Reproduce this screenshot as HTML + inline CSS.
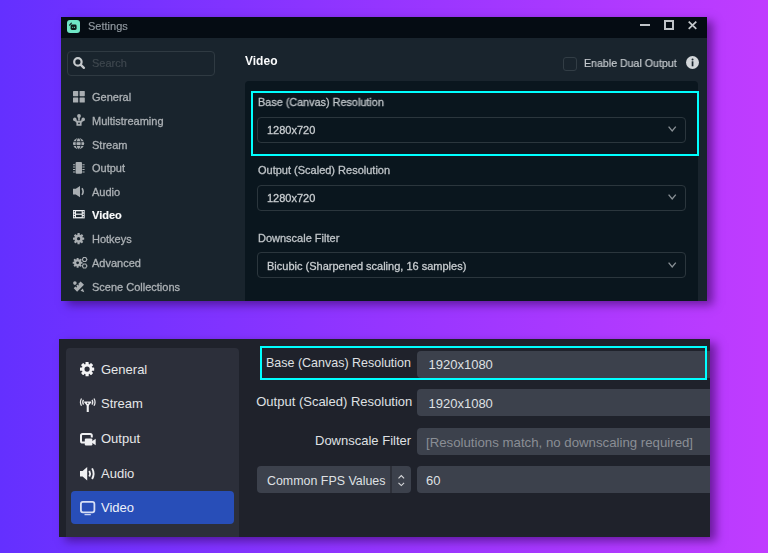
<!DOCTYPE html>
<html><head><meta charset="utf-8">
<style>
*{margin:0;padding:0;box-sizing:border-box}
html,body{width:768px;height:553px;overflow:hidden}
body{background:linear-gradient(90deg,#6430ff 0%,#9535ff 50%,#c03cff 100%);font-family:"Liberation Sans",sans-serif;position:relative}
.a{position:absolute}
svg{position:absolute;overflow:visible}
.t{position:absolute;white-space:nowrap;line-height:1;will-change:transform}
.s1{font-size:11px;color:#acb1b5;-webkit-text-stroke:0.3px #acb1b5}
.l1{font-size:11px;color:#bfc4c8;-webkit-text-stroke:0.3px #bfc4c8}
.dd{position:absolute;left:257px;width:428.5px;height:26px;border:1px solid #2b363d;border-radius:4px}
.s2{font-size:13px;color:#e6e7e9;will-change:auto}
.l2{font-size:13px;color:#dfe0e3;will-change:auto}
.inp{position:absolute;left:417px;width:292.5px;height:27px;background:#3c414c;border-radius:4px 0 0 4px}
</style></head><body>

<!-- ================= TOP WINDOW ================= -->
<div class="a" style="left:61px;top:17px;width:646px;height:284px;background:#19242d;box-shadow:6px 4px 9px rgba(45,0,80,.55)"></div>
<div class="a" style="left:61px;top:17px;width:646px;height:20.5px;background:#050c13"></div>
<!-- app logo -->
<svg style="left:67px;top:20px" width="13" height="13" viewBox="0 0 13 13">
  <rect x="0" y="0" width="13" height="13" rx="3" fill="#6fe6c6"/>
  <rect x="3.6" y="4.6" width="6" height="5.4" rx="1.4" fill="#0d1a1a"/>
  <path d="M2.6 5.2 L4.4 3.2" stroke="#0d1a1a" stroke-width="1.1" stroke-linecap="round"/>
  <rect x="5.2" y="6.8" width="1" height="1" fill="#6fe6c6"/><rect x="7" y="6.8" width="1" height="1" fill="#6fe6c6"/>
</svg>
<div class="t" style="left:88px;top:21px;font-size:11px;color:#939ba2;-webkit-text-stroke:0.15px #939ba2">Settings</div>
<!-- window buttons -->
<div class="a" style="left:640px;top:24.3px;width:10.2px;height:2px;background:#c0c4c8"></div>
<div class="a" style="left:663.7px;top:20px;width:10.3px;height:10px;border:2px solid #c0c4c8"></div>
<svg style="left:688px;top:21px" width="9" height="8.5" viewBox="0 0 9 8.5"><path d="M0.7 0.6L8.3 7.9M8.3 0.6L0.7 7.9" stroke="#c4c8cc" stroke-width="1.7"/></svg>

<!-- search -->
<div class="a" style="left:67px;top:50.5px;width:148px;height:25.5px;border:1px solid #2f3a42;border-radius:4px"></div>
<svg style="left:73px;top:57px" width="12" height="12" viewBox="0 0 12 12">
  <circle cx="4.9" cy="4.9" r="3.7" fill="none" stroke="#c6cacd" stroke-width="2.2"/>
  <path d="M7.6 7.6L10.9 10.9" stroke="#c6cacd" stroke-width="2.3" stroke-linecap="round"/>
</svg>
<div class="t" style="left:92px;top:58.2px;font-size:11px;color:#3e474e;-webkit-text-stroke:0.2px #3e474e">Search</div>

<!-- sidebar icons (top) -->
<svg style="left:72.7px;top:91px" width="12" height="12" viewBox="0 0 12 12" fill="#a9aeb2">
  <rect x="0" y="0" width="5.2" height="5.2" rx=".6"/><rect x="6.6" y="0" width="5.2" height="5.2" rx=".6"/>
  <rect x="0" y="6.4" width="5.2" height="5.2" rx=".6"/><rect x="6.6" y="6.4" width="5.2" height="5.2" rx=".6"/>
</svg>
<svg style="left:72.7px;top:114.2px" width="12" height="12" viewBox="0 0 12 12" fill="#a9aeb2">
  <circle cx="6" cy="1.9" r="1.9"/><circle cx="1.8" cy="5.4" r="1.8"/><circle cx="10.2" cy="5.4" r="1.8"/>
  <path d="M5.2 2.5h1.6v4h-1.6z"/><path d="M1.8 5.4 L4 7.5 L3.3 8 z" stroke="#a9aeb2" stroke-width="1.2"/><path d="M10.2 5.4 L8 7.5 L8.7 8 z" stroke="#a9aeb2" stroke-width="1.2"/>
  <rect x="3.4" y="6.8" width="5.2" height="5" rx=".6"/>
  <circle cx="6" cy="9.3" r=".9" fill="#19242d"/>
</svg>
<svg style="left:72.9px;top:138px" width="11.2" height="11.2" viewBox="0 0 11.2 11.2">
  <circle cx="5.6" cy="5.6" r="5.6" fill="#a9aeb2"/>
  <path d="M0 3.7H11.2M0 7.5H11.2" stroke="#19242d" stroke-width=".9"/>
  <ellipse cx="5.6" cy="5.6" rx="2.5" ry="5.6" fill="none" stroke="#19242d" stroke-width=".9"/>
</svg>
<svg style="left:72.8px;top:161.5px" width="11.6" height="11.8" viewBox="0 0 11.6 11.8" fill="#a9aeb2">
  <rect x="2.6" y="0" width="6.4" height="11.8" rx="1"/>
  <path d="M0 2.2h2.2v1h-2.2zM0 4.6h2.2v1h-2.2zM0 7h2.2v1h-2.2zM0 9.4h2.2v1h-2.2zM9.4 2.2h2.2v1h-2.2zM9.4 4.6h2.2v1h-2.2zM9.4 7h2.2v1h-2.2zM9.4 9.4h2.2v1h-2.2z"/>
</svg>
<svg style="left:72.9px;top:186px" width="11.4" height="11.2" viewBox="0 0 11.4 11.2">
  <path d="M0 2.7H2.8L7 0V11.2L2.8 8.4H0Z" fill="#a9aeb2"/>
  <path d="M9 2.3Q11.3 5.6 9 8.9" fill="none" stroke="#a9aeb2" stroke-width="1.6"/>
</svg>
<svg style="left:72.7px;top:210.4px" width="11.7" height="8.4" viewBox="0 0 11.7 8.4">
  <rect x="0" y="0" width="11.7" height="8.4" fill="#eef0f2"/>
  <rect x="3" y="1.3" width="5.7" height="2.3" fill="#19242d"/><rect x="3" y="4.8" width="5.7" height="2.3" fill="#19242d"/>
  <path d="M0.8 1.2h1.2v1h-1.2zM0.8 3.7h1.2v1h-1.2zM0.8 6.2h1.2v1h-1.2zM9.7 1.2h1.2v1h-1.2zM9.7 3.7h1.2v1h-1.2zM9.7 6.2h1.2v1h-1.2z" fill="#19242d"/>
</svg>
<svg style="left:73px;top:233px" width="11.2" height="11.4" viewBox="-5.6 -5.7 11.2 11.4"><g fill="#a9aeb2"><rect x="-1.1" y="-5.6" width="2.2" height="2.3" rx="0.3" transform="rotate(0)"/><rect x="-1.1" y="-5.6" width="2.2" height="2.3" rx="0.3" transform="rotate(45)"/><rect x="-1.1" y="-5.6" width="2.2" height="2.3" rx="0.3" transform="rotate(90)"/><rect x="-1.1" y="-5.6" width="2.2" height="2.3" rx="0.3" transform="rotate(135)"/><rect x="-1.1" y="-5.6" width="2.2" height="2.3" rx="0.3" transform="rotate(180)"/><rect x="-1.1" y="-5.6" width="2.2" height="2.3" rx="0.3" transform="rotate(225)"/><rect x="-1.1" y="-5.6" width="2.2" height="2.3" rx="0.3" transform="rotate(270)"/><rect x="-1.1" y="-5.6" width="2.2" height="2.3" rx="0.3" transform="rotate(315)"/><circle r="4.1"/></g><circle r="1.6" fill="#19242d"/></svg>
<svg style="left:72.9px;top:256.6px" width="14" height="11.4" viewBox="0 0 14 11.4"><g transform="translate(4.6 5.8)"><g fill="#a9aeb2"><rect x="-1.0" y="-4.9" width="2" height="2.1000000000000005" rx="0.3" transform="rotate(0)"/><rect x="-1.0" y="-4.9" width="2" height="2.1000000000000005" rx="0.3" transform="rotate(45)"/><rect x="-1.0" y="-4.9" width="2" height="2.1000000000000005" rx="0.3" transform="rotate(90)"/><rect x="-1.0" y="-4.9" width="2" height="2.1000000000000005" rx="0.3" transform="rotate(135)"/><rect x="-1.0" y="-4.9" width="2" height="2.1000000000000005" rx="0.3" transform="rotate(180)"/><rect x="-1.0" y="-4.9" width="2" height="2.1000000000000005" rx="0.3" transform="rotate(225)"/><rect x="-1.0" y="-4.9" width="2" height="2.1000000000000005" rx="0.3" transform="rotate(270)"/><rect x="-1.0" y="-4.9" width="2" height="2.1000000000000005" rx="0.3" transform="rotate(315)"/><circle r="3.6"/></g><circle r="1.4" fill="#19242d"/></g><g transform="translate(11.6 2.5)"><path d="M-2.3 0L-1.15-2L1.15-2L2.3 0L1.15 2L-1.15 2Z" fill="none" stroke="#a9aeb2" stroke-width="1.2"/></g><g transform="translate(11.6 9)"><path d="M-2.3 0L-1.15-2L1.15-2L2.3 0L1.15 2L-1.15 2Z" fill="none" stroke="#a9aeb2" stroke-width="1.2"/></g></svg>
<svg style="left:72.8px;top:280.6px" width="11.5" height="11.3" viewBox="0 0 11.5 11.3" fill="#a9aeb2">
  <circle cx="1.9" cy="2.1" r="1.8"/>
  <path d="M7.6 0.4L11 3.8L4.1 10.7L0.7 7.3L2.4 5.6L3.5 6.5L4.2 5.8L3.3 4.7L4.4 3.6L5.3 4.5L6 3.8L5.1 2.9Z"/>
  <path d="M9.8 7.4L11.3 11.2L7.5 9.7Z"/>
</svg>

<!-- sidebar labels (top) -->
<div class="t s1" style="left:92px;top:92.1px">General</div>
<div class="t s1" style="left:92px;top:115.8px">Multistreaming</div>
<div class="t s1" style="left:92px;top:139.5px">Stream</div>
<div class="t s1" style="left:92px;top:163.2px">Output</div>
<div class="t s1" style="left:92px;top:186.9px">Audio</div>
<div class="t" style="left:92px;top:210.1px;font-size:11px;font-weight:bold;color:#fafbfc;-webkit-text-stroke:0.15px #fafbfc">Video</div>
<div class="t s1" style="left:92px;top:234.3px">Hotkeys</div>
<div class="t s1" style="left:92px;top:257.8px">Advanced</div>
<div class="t s1" style="left:92px;top:281.6px">Scene Collections</div>

<!-- header -->
<div class="t" style="left:245px;top:55px;font-size:12px;font-weight:bold;color:#fafbfc">Video</div>
<div class="a" style="left:563px;top:57px;width:14px;height:13.5px;border:1.5px solid #323d45;border-radius:3px"></div>
<div class="t l1" style="left:584px;top:58.2px;color:#c6cbcf;-webkit-text-stroke:0.2px #c6cbcf;transform:scaleX(.965);transform-origin:0 0">Enable Dual Output</div>
<svg style="left:685.6px;top:55.8px" width="13" height="13" viewBox="0 0 13 13">
  <circle cx="6.5" cy="6.5" r="6.5" fill="#d3d7da"/>
  <rect x="5.7" y="5.3" width="1.7" height="5" fill="#19242d"/>
  <circle cx="6.55" cy="3.5" r="1" fill="#19242d"/>
</svg>

<!-- content panel -->
<div class="a" style="left:244.5px;top:80.7px;width:453px;height:220.3px;background:#0a161e;border-radius:4px 4px 0 0"></div>
<div class="a" style="left:250.75px;top:91.25px;width:448.5px;height:64.75px;border:2.75px solid #00ffff"></div>
<div class="t l1" style="left:257.5px;top:96.9px;transform:scaleX(.985);transform-origin:0 0">Base (Canvas) Resolution</div>
<div class="dd" style="top:117px"></div>
<div class="t l1" style="left:266.5px;top:124.9px;color:#d0d4d7">1280x720</div>
<div class="t l1" style="left:257.5px;top:164.9px">Output (Scaled) Resolution</div>
<div class="dd" style="top:184.5px"></div>
<div class="t l1" style="left:266.5px;top:192.9px;color:#d0d4d7">1280x720</div>
<div class="t l1" style="left:257.5px;top:232.7px">Downscale Filter</div>
<div class="dd" style="top:252px"></div>
<div class="t l1" style="left:266.5px;top:260.9px;color:#d0d4d7">Bicubic (Sharpened scaling, 16 samples)</div>
<svg style="left:668px;top:126px" width="8.4" height="6" viewBox="0 0 8.4 6"><path d="M0.6 0.6L4.2 5L7.8 0.6" fill="none" stroke="#8a9196" stroke-width="1.3"/></svg>
<svg style="left:668px;top:193.5px" width="8.4" height="6" viewBox="0 0 8.4 6"><path d="M0.6 0.6L4.2 5L7.8 0.6" fill="none" stroke="#8a9196" stroke-width="1.3"/></svg>
<svg style="left:668px;top:261.5px" width="8.4" height="6" viewBox="0 0 8.4 6"><path d="M0.6 0.6L4.2 5L7.8 0.6" fill="none" stroke="#8a9196" stroke-width="1.3"/></svg>

<!-- ================= BOTTOM WINDOW ================= -->
<div class="a" style="left:59px;top:339px;width:650.5px;height:197.5px;background:#1f222b;box-shadow:6px 4px 9px rgba(45,0,80,.55)"></div>
<div class="a" style="left:66px;top:348px;width:173.3px;height:188.5px;background:#2c2f3a;border-radius:4px 4px 0 0"></div>
<div class="a" style="left:70.8px;top:491.3px;width:163.2px;height:32.7px;background:#284eb8;border-radius:4px"></div>

<!-- bottom sidebar icons -->
<svg style="left:80.1px;top:362.3px" width="14.2" height="14.2" viewBox="-7.1 -7.1 14.2 14.2"><g fill="#f4f4f5"><rect x="-1.6" y="-7.1" width="3.2" height="2.6" rx="0.5" transform="rotate(0)"/><rect x="-1.6" y="-7.1" width="3.2" height="2.6" rx="0.5" transform="rotate(45)"/><rect x="-1.6" y="-7.1" width="3.2" height="2.6" rx="0.5" transform="rotate(90)"/><rect x="-1.6" y="-7.1" width="3.2" height="2.6" rx="0.5" transform="rotate(135)"/><rect x="-1.6" y="-7.1" width="3.2" height="2.6" rx="0.5" transform="rotate(180)"/><rect x="-1.6" y="-7.1" width="3.2" height="2.6" rx="0.5" transform="rotate(225)"/><rect x="-1.6" y="-7.1" width="3.2" height="2.6" rx="0.5" transform="rotate(270)"/><rect x="-1.6" y="-7.1" width="3.2" height="2.6" rx="0.5" transform="rotate(315)"/><circle r="5.3"/></g><circle r="2.6" fill="#2c2f3a"/></svg>
<svg style="left:79.5px;top:398.3px" width="15.5" height="14" viewBox="0 0 15.5 14">
  <path d="M7.75 6V14" stroke="#f0f0f2" stroke-width="2.1"/>
  <path d="M4.8 4.1H10.7L7.75 7.6Z" fill="#f0f0f2" stroke="#f0f0f2" stroke-width="1.4" stroke-linejoin="round"/>
  <circle cx="7.75" cy="5.2" r=".7" fill="#2c2f3a"/>
  <path d="M3.5 1.8Q1.9 4.1 3.5 6.6M12 1.8Q13.6 4.1 12 6.6M1.5 0.5Q-0.6 4.1 1.5 7.8M14 0.5Q16.1 4.1 14 7.8" fill="none" stroke="#e8e8ea" stroke-width="1.25"/>
</svg>
<svg style="left:79.8px;top:432.7px" width="15.7" height="12.5" viewBox="0 0 15.7 12.5">
  <path d="M5 9.6H2.6Q1 9.6 1 8V2.6Q1 1 2.6 1H10.2Q11.8 1 11.8 2.6V4.4" fill="none" stroke="#f0f0f2" stroke-width="2"/>
  <rect x="4.8" y="5.6" width="7.6" height="6.9" rx="1.2" fill="#f0f0f2"/>
  <path d="M12 8.2L15.7 5.8V12.2L12 9.8Z" fill="#f0f0f2"/>
</svg>
<svg style="left:79.8px;top:466.7px" width="15.5" height="13.4" viewBox="0 0 15.5 13.4">
  <path d="M0 4H2.6L7.2 0V13.4L2.6 9.4H0Z" fill="#f0f0f2"/>
  <path d="M9.3 3.9Q10.9 6.7 9.3 9.5" fill="none" stroke="#f0f0f2" stroke-width="1.9"/>
  <path d="M12.1 1.4Q15.1 6.7 12.1 12" fill="none" stroke="#f0f0f2" stroke-width="1.9"/>
</svg>
<svg style="left:79.75px;top:501.25px" width="15.3" height="14.4" viewBox="0 0 15.3 14.4">
  <rect x="0.9" y="0.9" width="13.5" height="10.4" rx="2" fill="none" stroke="#d6def5" stroke-width="1.8"/>
  <path d="M4.5 13.6H10.8" stroke="#c8d2f0" stroke-width="1.3"/>
</svg>

<!-- bottom sidebar labels -->
<div class="t s2" style="left:101px;top:362.7px">General</div>
<div class="t s2" style="left:101px;top:397.4px">Stream</div>
<div class="t s2" style="left:101px;top:432px">Output</div>
<div class="t s2" style="left:101px;top:466.75px">Audio</div>
<div class="t s2" style="left:101px;top:501.25px;color:#eef1fa">Video</div>

<!-- bottom content -->
<div class="inp" style="top:350.75px;height:26.75px"></div>
<div class="a" style="left:259.5px;top:346.3px;width:447.7px;height:34px;border:2.3px solid #00ffff"></div>
<div class="t l2" style="left:265.9px;top:356px;transform:scaleX(.96);transform-origin:0 0">Base (Canvas) Resolution</div>
<div class="t l2" style="left:428.5px;top:357.75px">1920x1080</div>
<div class="t l2" style="left:256.25px;top:395.25px">Output (Scaled) Resolution</div>
<div class="inp" style="top:389px"></div>
<div class="t l2" style="left:428.5px;top:396.5px">1920x1080</div>
<div class="t l2" style="left:315px;top:434px">Downscale Filter</div>
<div class="inp" style="top:428.1px"></div>
<div class="t l2" style="left:425.5px;top:436px;color:#8a8e95;transform:scaleX(1.018);transform-origin:0 0">[Resolutions match, no downscaling required]</div>
<div class="a" style="left:257px;top:466.2px;width:154px;height:26.8px;background:#3c414c;border-radius:4px"></div>
<div class="a" style="left:390.3px;top:466.2px;width:1.5px;height:26.8px;background:#2d3039"></div>
<div class="t l2" style="left:267px;top:474px;transform:scaleX(.955);transform-origin:0 0">Common FPS Values</div>
<svg style="left:398.4px;top:474.5px" width="6.6" height="11.2" viewBox="0 0 6.6 11.2"><path d="M0.5 3.4L3.3 0.6L6.1 3.4M0.5 7.8L3.3 10.6L6.1 7.8" fill="none" stroke="#d8d9dc" stroke-width="1.1"/></svg>
<div class="inp" style="top:466.2px"></div>
<div class="t l2" style="left:426px;top:474.2px">60</div>

</body></html>
